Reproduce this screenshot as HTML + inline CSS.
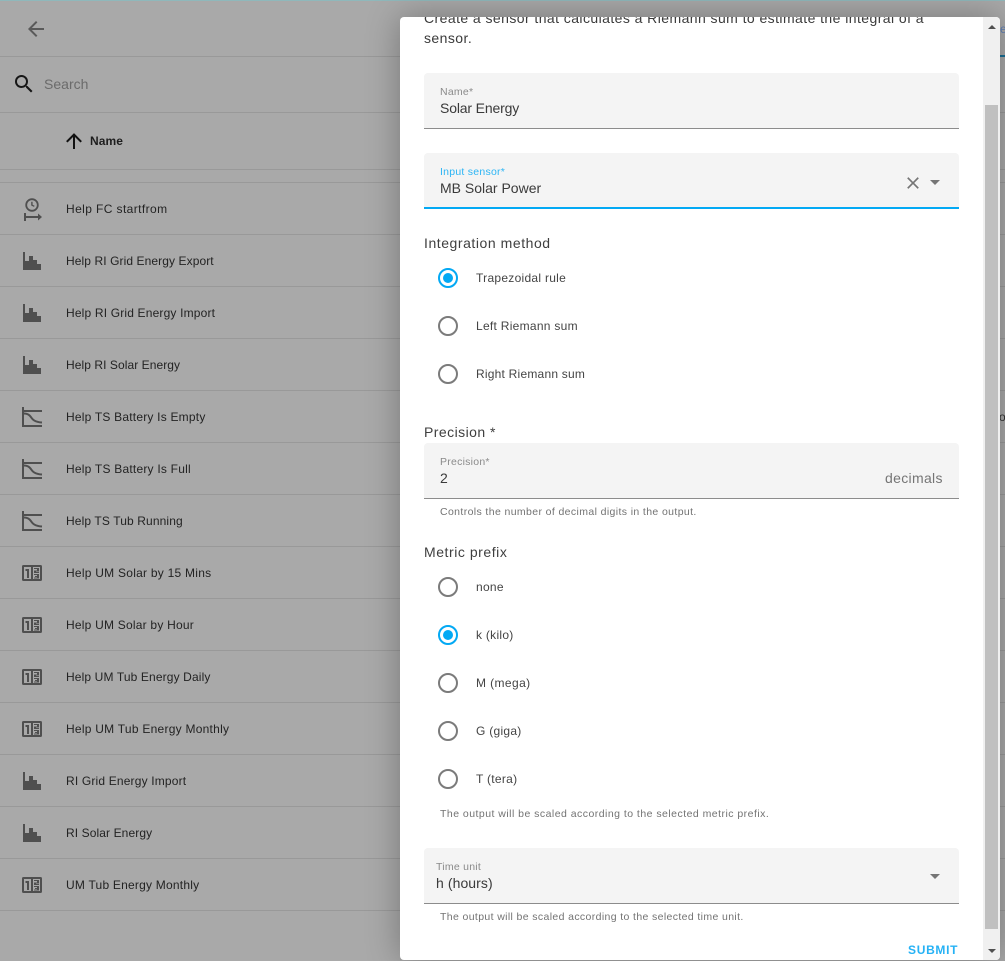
<!DOCTYPE html>
<html><head><meta charset="utf-8">
<style>
html,body{margin:0;padding:0;width:1005px;height:961px;overflow:hidden;background:#a9a9a9;font-family:"Liberation Sans",sans-serif}
.t{position:absolute;white-space:nowrap;line-height:16px}
.l{position:absolute;left:0;width:1005px;height:1px;background:#999}
.row{color:#232323;font-size:12px;left:66px;letter-spacing:.17px}
.ic{position:absolute;left:20px;width:24px;height:24px;fill:#4f4f4f}
.fld{position:absolute;left:424px;width:535px;background:#f4f4f4;border-radius:4px 4px 0 0;border-bottom:1px solid #8c8c8c;box-sizing:border-box}
.lab{font-size:10.5px;color:#8a8a8a;letter-spacing:.25px}
.val{font-size:14px;color:#3a3a3a;letter-spacing:-.15px}
.h{font-size:14px;color:#3f3f3f;letter-spacing:.55px;left:424px}
.opt{font-size:12px;color:#444;left:476px;letter-spacing:.28px}
.help{font-size:10.5px;color:#737373;left:440px;letter-spacing:.42px}
.r{position:absolute;left:438px;width:20px;height:20px;box-sizing:border-box;border:2px solid #7b7b7b;border-radius:50%}
.r.on{border-color:#03a9f4}
.r.on:after{content:"";position:absolute;left:3px;top:3px;width:10px;height:10px;border-radius:50%;background:#03a9f4}
</style></head><body>
<div style="position:absolute;left:0;top:0;width:1005px;height:1px;background:#8fb8bb"></div>
<svg style="position:absolute;left:24px;top:17px" width="24" height="24" viewBox="0 0 24 24"><path fill="#5a5a5a" d="M20 11H7.830l5.590-5.590L12 4l-8 8 8 8 1.410-1.410L7.830 13H20z"/></svg>
<div class="l" style="top:56px"></div>
<svg style="position:absolute;left:12px;top:72px" width="24" height="24" viewBox="0 0 24 24"><path fill="#161616" d="M9.500 3A6.500 6.500 0 0 1 16 9.500c0 1.610-.59 3.090-1.560 4.230l.27.27h.79l5 5-1.500 1.500-5-5v-.79l-.27-.27A6.520 6.520 0 0 1 9.500 16 6.500 6.500 0 0 1 3 9.500 6.500 6.500 0 0 1 9.500 3m0 2C7 5 5 7 5 9.500S7 14 9.500 14 14 12 14 9.500 12 5 9.500 5z"/></svg>
<div class="t" style="left:44px;top:76px;font-size:14px;color:#6b6b6b;letter-spacing:.02px">Search</div>
<div class="l" style="top:112px"></div>
<svg style="position:absolute;left:62px;top:129px" width="24" height="24" viewBox="0 0 24 24"><path fill="#111" d="M13 20h-2V8l-5.500 5.500-1.420-1.420L12 4.160l7.920 7.920-1.420 1.420L13 8z"/></svg>
<div class="t" style="left:90px;top:133px;font-size:12px;font-weight:bold;color:#1e1e1e;letter-spacing:.1px">Name</div>
<div class="l" style="top:169px"></div>
<div class="l" style="top:182px"></div>
<div class="l" style="top:234px"></div><div class="l" style="top:286px"></div><div class="l" style="top:338px"></div><div class="l" style="top:390px"></div><div class="l" style="top:442px"></div><div class="l" style="top:494px"></div><div class="l" style="top:546px"></div><div class="l" style="top:598px"></div><div class="l" style="top:650px"></div><div class="l" style="top:702px"></div><div class="l" style="top:754px"></div><div class="l" style="top:806px"></div><div class="l" style="top:858px"></div><div class="l" style="top:910px"></div>

<svg width="0" height="0" style="position:absolute"><defs>
<symbol id="ri" viewBox="0 0 24 24"><path d="M3 3h2v9h4V7h4v4h4v4h4v6H3z"/></symbol>
<symbol id="ts" viewBox="0 0 24 24"><path d="M2 2h2v3h18v2H4v13h18v2H2z"/><path d="M4 8.500C7 8.500 9 9.500 10.500 11.500S13.500 17 22 17.500" fill="none" stroke="#4f4f4f" stroke-width="2"/></symbol>
<symbol id="um" viewBox="0 0 24 24"><path fill-rule="evenodd" d="M3.500 4h17A1.500 1.500 0 0 1 22 5.500v13a1.500 1.500 0 0 1-1.500 1.500h-17A1.500 1.500 0 0 1 2 18.500v-13A1.500 1.500 0 0 1 3.500 4zM4 6v12h7V6zm9 0v12h7V6z"/><path d="M5.500 8H9v9H7v-7H5.500zM14 7h5v3.500h-3v.5h3v1h-5V9.500h3V8h-3zM14 13h5v4.500h-5v-1h3V16h-2v-1h2v-1h-3z"/></symbol>
</defs></svg>

<svg class="ic" style="top:197px" viewBox="0 0 24 24"><circle cx="12" cy="8" r="5.800" fill="none" stroke="#4f4f4f" stroke-width="1.800"/><path d="M11.200 4.800h1.400v3l2 1-.6 1.100-2.800-1.400zM4 16h2v3h12v-2.500l4 3.500-4 3.500V21H6v3H4z"/></svg>
<div class="t row" style="top:201px;letter-spacing:.4px">Help FC startfrom</div>
<svg class="ic" style="top:249px"><use href="#ri"/></svg><div class="t row" style="top:253px;letter-spacing:.09px">Help RI Grid Energy Export</div>
<svg class="ic" style="top:301px"><use href="#ri"/></svg><div class="t row" style="top:305px">Help RI Grid Energy Import</div>
<svg class="ic" style="top:353px"><use href="#ri"/></svg><div class="t row" style="top:357px;letter-spacing:.07px">Help RI Solar Energy</div>
<svg class="ic" style="top:405px"><use href="#ts"/></svg><div class="t row" style="top:409px;letter-spacing:.21px">Help TS Battery Is Empty</div>
<svg class="ic" style="top:457px"><use href="#ts"/></svg><div class="t row" style="top:461px;letter-spacing:.22px">Help TS Battery Is Full</div>
<svg class="ic" style="top:509px"><use href="#ts"/></svg><div class="t row" style="top:513px;letter-spacing:.12px">Help TS Tub Running</div>
<svg class="ic" style="top:561px"><use href="#um"/></svg><div class="t row" style="top:565px;letter-spacing:.25px">Help UM Solar by 15 Mins</div>
<svg class="ic" style="top:613px"><use href="#um"/></svg><div class="t row" style="top:617px;letter-spacing:.22px">Help UM Solar by Hour</div>
<svg class="ic" style="top:665px"><use href="#um"/></svg><div class="t row" style="top:669px;letter-spacing:.13px">Help UM Tub Energy Daily</div>
<svg class="ic" style="top:717px"><use href="#um"/></svg><div class="t row" style="top:721px;letter-spacing:.25px">Help UM Tub Energy Monthly</div>
<svg class="ic" style="top:769px"><use href="#ri"/></svg><div class="t row" style="top:773px">RI Grid Energy Import</div>
<svg class="ic" style="top:821px"><use href="#ri"/></svg><div class="t row" style="top:825px;letter-spacing:.1px">RI Solar Energy</div>
<svg class="ic" style="top:873px"><use href="#um"/></svg><div class="t row" style="top:877px;letter-spacing:.22px">UM Tub Energy Monthly</div>

<div class="t" style="left:1000px;top:21px;font-size:12px;color:#5f7fb5;letter-spacing:.2px">el</div>
<div style="position:absolute;left:1000px;top:55px;width:5px;height:2px;background:#1a6f96"></div>
<div class="t" style="left:999px;top:409px;font-size:12px;color:#333">ot</div>

<div style="position:absolute;left:400px;top:17px;width:600px;height:943px;background:#fff;border-radius:4px;box-shadow:0 0 34px rgba(0,0,0,.3);overflow:hidden">
  <div style="position:absolute;left:583px;top:0;width:17px;height:943px;background:#f0f0f0"></div>
  <div style="position:absolute;left:585px;top:88px;width:13px;height:824px;background:#c0c0c0"></div>
  <div style="position:absolute;left:587.500px;top:8px;width:0;height:0;border:4px solid transparent;border-top:0;border-bottom:4px solid #505050"></div>
  <div style="position:absolute;left:587.500px;top:932px;width:0;height:0;border:4px solid transparent;border-bottom:0;border-top:4px solid #505050"></div>
</div>
<div style="position:absolute;left:400px;top:17px;width:583px;height:900px;overflow:hidden">
  <div class="t" style="left:24px;top:-9px;font-size:14px;color:#3a3a3a;letter-spacing:.43px;line-height:20px">Create a sensor that calculates a Riemann sum to estimate the integral of a<br>sensor.</div>
</div>

<div class="fld" style="top:73px;height:56px"></div>
<div class="t lab" style="left:440px;top:84px">Name*</div>
<div class="t val" style="left:440px;top:100px">Solar Energy</div>

<div class="fld" style="top:153px;height:56px;border-bottom:2px solid #03a9f4"></div>
<div class="t lab" style="left:440px;top:164px;color:#2cb5f5">Input sensor*</div>
<div class="t val" style="left:440px;top:180px;letter-spacing:0">MB Solar Power</div>
<svg style="position:absolute;left:903px;top:173px" width="20" height="20" viewBox="0 0 24 24"><path fill="#757575" d="M19 6.410 17.590 5 12 10.590 6.410 5 5 6.410 10.590 12 5 17.590 6.410 19 12 13.410 17.590 19 19 17.590 13.410 12z"/></svg>
<div style="position:absolute;left:930px;top:180px;width:0;height:0;border:5px solid transparent;border-bottom:0;border-top:5px solid #757575"></div>

<div class="t h" style="top:235px">Integration method</div>
<div class="r on" style="top:268px"></div><div class="t opt" style="top:270px">Trapezoidal rule</div>
<div class="r" style="top:316px"></div><div class="t opt" style="top:318px">Left Riemann sum</div>
<div class="r" style="top:364px"></div><div class="t opt" style="top:366px;letter-spacing:.22px">Right Riemann sum</div>

<div class="t h" style="top:424px;letter-spacing:.45px">Precision *</div>
<div class="fld" style="top:443px;height:56px"></div>
<div class="t lab" style="left:440px;top:454px">Precision*</div>
<div class="t val" style="left:440px;top:470px">2</div>
<div class="t" style="left:885px;top:470px;font-size:14px;color:#757575;letter-spacing:.32px">decimals</div>
<div class="t help" style="top:504px;letter-spacing:.38px">Controls the number of decimal digits in the output.</div>

<div class="t h" style="top:544px">Metric prefix</div>
<div class="r" style="top:577px"></div><div class="t opt" style="top:579px">none</div>
<div class="r on" style="top:625px"></div><div class="t opt" style="top:627px">k (kilo)</div>
<div class="r" style="top:673px"></div><div class="t opt" style="top:675px;letter-spacing:.4px">M (mega)</div>
<div class="r" style="top:721px"></div><div class="t opt" style="top:723px">G (giga)</div>
<div class="r" style="top:769px"></div><div class="t opt" style="top:771px">T (tera)</div>
<div class="t help" style="top:806px;letter-spacing:.47px">The output will be scaled according to the selected metric prefix.</div>

<div class="fld" style="top:848px;height:56px"></div>
<div class="t lab" style="left:436px;top:859px">Time unit</div>
<div class="t val" style="left:436px;top:875px;letter-spacing:.08px">h (hours)</div>
<div style="position:absolute;left:930px;top:874px;width:0;height:0;border:5px solid transparent;border-bottom:0;border-top:5px solid #757575"></div>
<div class="t help" style="top:909px;letter-spacing:.37px">The output will be scaled according to the selected time unit.</div>
<div class="t" style="left:908px;top:942px;font-size:12px;font-weight:bold;color:#26b2f5;letter-spacing:.7px">SUBMIT</div>
</body></html>
